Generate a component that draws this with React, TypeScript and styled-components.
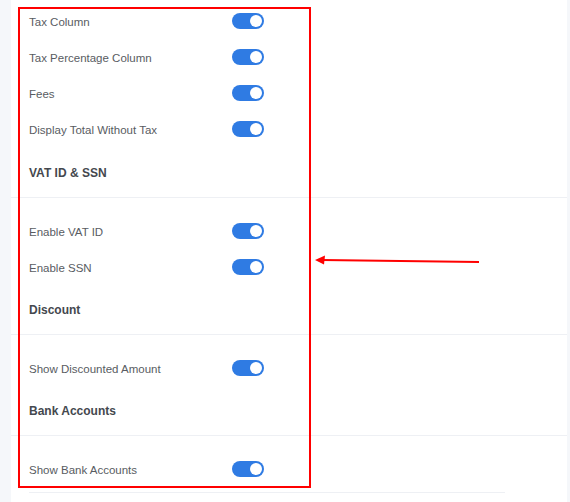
import React from 'react';
import styled, { createGlobalStyle } from 'styled-components';

const GlobalStyle = createGlobalStyle`
  html, body {
    margin: 0;
    padding: 0;
    background-color: #f5f7fa;
  }
  body {
    font-family: 'Liberation Sans', Arial, sans-serif;
  }
`;

const Page = styled.div`
  position: relative;
  width: 570px;
  height: 502px;
  overflow: hidden;
`;

const Panel = styled.div`
  margin-left: 11px;
  width: 556px;
  height: 502px;
  background-color: #ffffff;
`;

const Body = styled.div<{ $first?: boolean }>`
  padding: ${(p) => (p.$first ? '3px 0 1px' : '15px 0 0')};
`;

const Row = styled.div`
  display: grid;
  grid-template-columns: 203px 32px;
  align-items: center;
  height: 36px;
  padding-left: 18px;
`;

const Label = styled.span`
  font-size: 11.5px;
  color: #585c62;
  padding-top: 1px;
`;

const Toggle = styled.span<{ $on: boolean }>`
  display: inline-flex;
  align-items: center;
  justify-content: ${(p) => (p.$on ? 'flex-end' : 'flex-start')};
  box-sizing: border-box;
  width: 32px;
  height: 16px;
  padding: 0 2px;
  border-radius: 8px;
  background-color: ${(p) => (p.$on ? '#2f7be3' : '#c8ccd2')};

  &::after {
    content: '';
    width: 12px;
    height: 12px;
    border-radius: 50%;
    background-color: #ffffff;
  }
`;

const Header = styled.div`
  display: flex;
  align-items: center;
  height: 48px;
  padding: 1px 0 0 18px;
  border-bottom: 1px solid #eef0f4;
  font-size: 12px;
  font-weight: bold;
  color: #44484e;
`;

const Divider = styled.div`
  margin: 5px 0 0 18px;
  width: 476px;
  height: 1px;
  background-color: #eef0f4;
`;

const Highlight = styled.div`
  position: absolute;
  left: 18px;
  top: 7px;
  width: 289px;
  height: 477px;
  border: 2px solid #ff0000;
`;

const Arrow = styled.svg`
  position: absolute;
  left: 310px;
  top: 250px;
`;

type Section = { title?: string; rows: string[] };

const sections: Section[] = [
  { rows: ['Tax Column', 'Tax Percentage Column', 'Fees', 'Display Total Without Tax'] },
  { title: 'VAT ID & SSN', rows: ['Enable VAT ID', 'Enable SSN'] },
  { title: 'Discount', rows: ['Show Discounted Amount'] },
  { title: 'Bank Accounts', rows: ['Show Bank Accounts'] },
];

export default function App() {
  return (
    <Page>
      <GlobalStyle />
      <Panel>
        {sections.map((s, i) => (
          <React.Fragment key={i}>
            {s.title && <Header>{s.title}</Header>}
            <Body $first={i === 0}>
              {s.rows.map((r) => (
                <Row key={r}>
                  <Label>{r}</Label>
                  <Toggle $on />
                </Row>
              ))}
            </Body>
          </React.Fragment>
        ))}
        <Divider />
      </Panel>
      <Highlight />
      <Arrow width="175" height="24" viewBox="0 0 175 24">
        <line x1="169" y1="12" x2="12" y2="10" stroke="#ff0000" strokeWidth="2" />
        <polygon points="5,10 15,5.5 14,14.5" fill="#ff0000" />
      </Arrow>
    </Page>
  );
}
